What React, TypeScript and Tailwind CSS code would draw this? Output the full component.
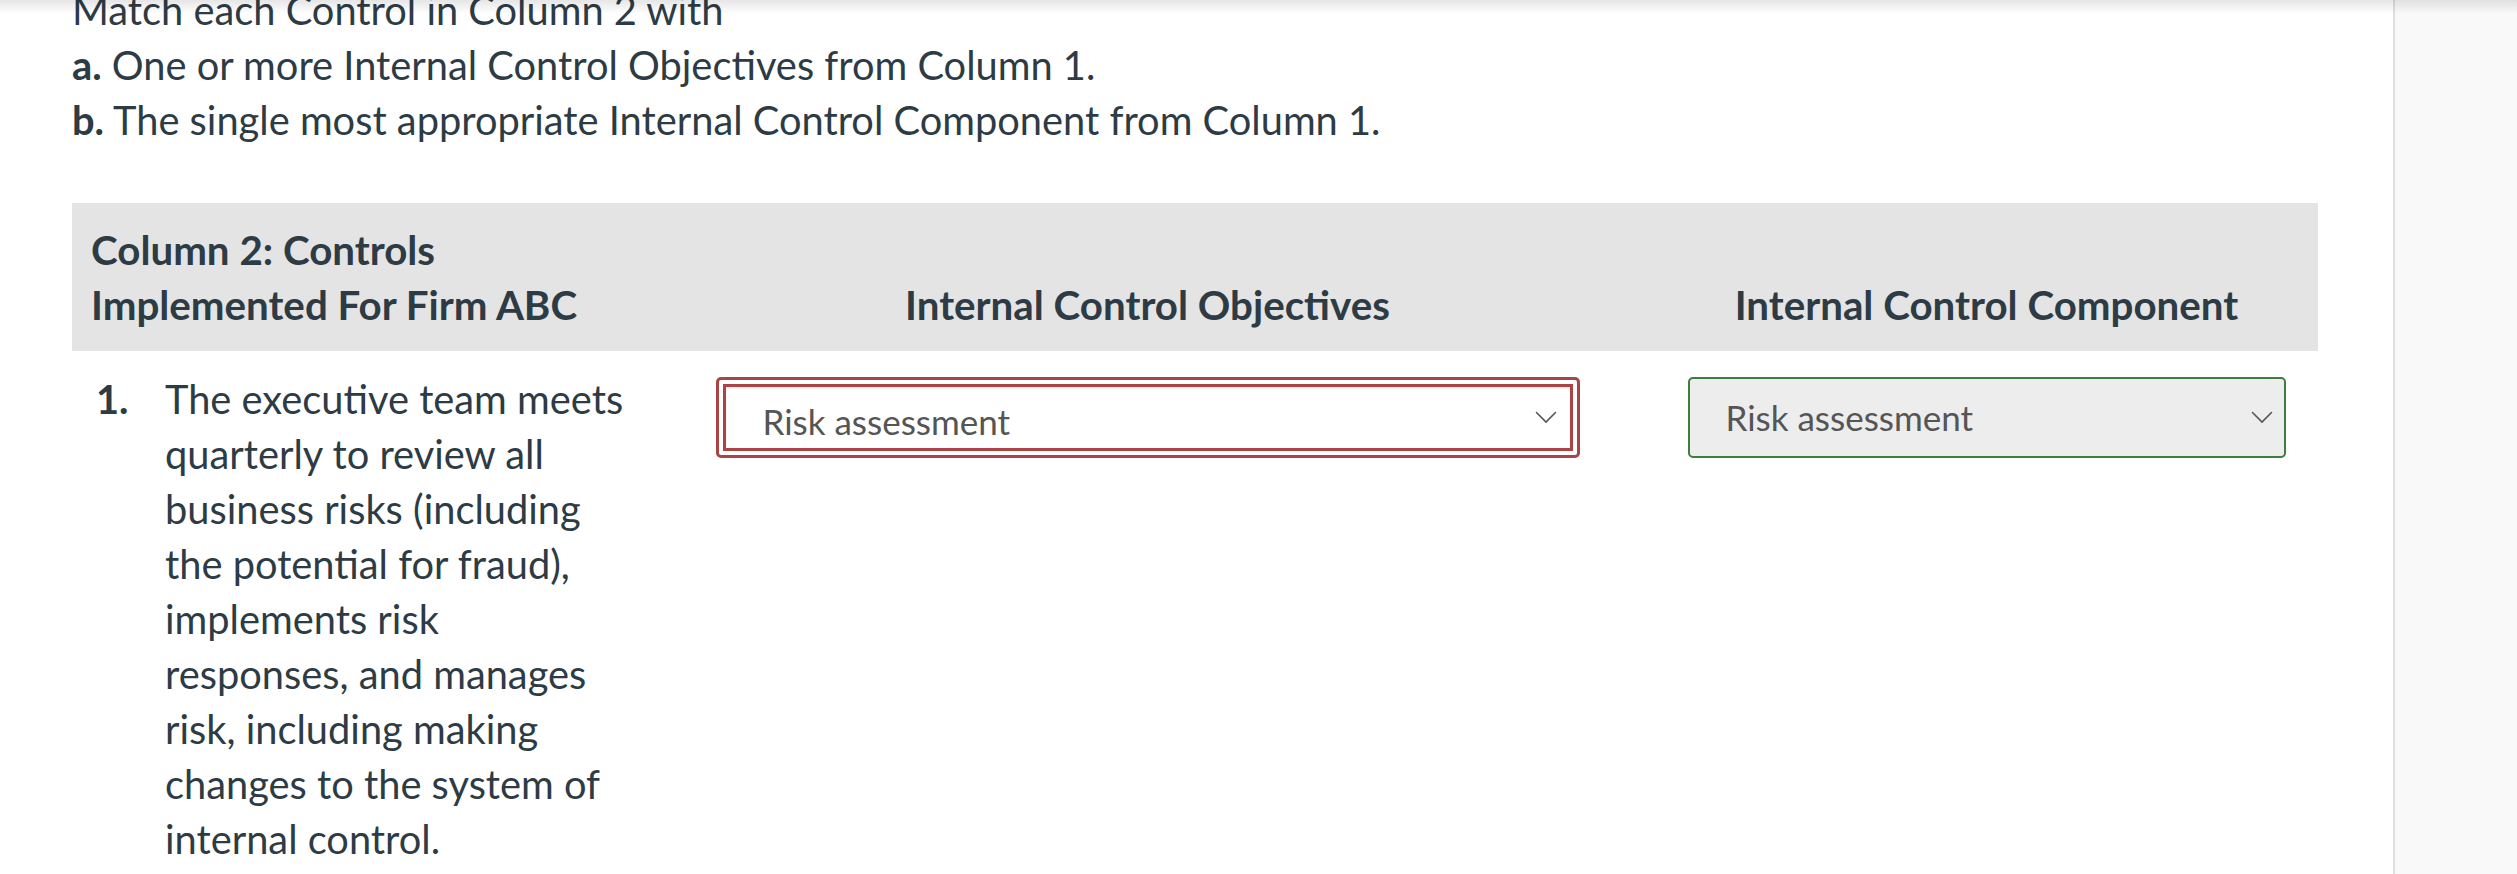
import React from 'react';

const Chevron = () => (
  <svg width="22" height="13" viewBox="0 0 22 13" fill="none" stroke="#555" strokeWidth="1.6" strokeLinecap="round">
    <polyline points="1.5,1.5 11,11 20.5,1.5" />
  </svg>
);

const App = () => {
  return (
    <div className="relative flex h-[874px] w-full overflow-hidden bg-white font-[Lato,sans-serif] text-[#2d3b45]">
      {/* shadow from the fixed bar above */}
      <div className="pointer-events-none absolute inset-x-0 top-0 h-[14px] bg-gradient-to-b from-black/10 to-transparent" />

      <main className="flex-1 border-r-2 border-[#dedede] pl-[72px]">
        <div className="-mt-[18px] text-[39.8px] leading-[55px]">
          <p>Match each Control in Column 2 with</p>
          <p>
            <b>a.</b> One or more Internal Control Objectives from Column 1.
          </p>
          <p>
            <b>b.</b> The single most appropriate Internal Control Component from Column 1.
          </p>
        </div>

        <div className="mt-[56px] w-[2246px] text-[39.8px] leading-[55px]">
          <div className="grid grid-cols-[568px_1015px_663px] items-end bg-[#e4e4e4] text-[40.3px] font-bold">
            <div className="py-[19px] pl-[19px] pr-[18px]">
              Column 2: Controls
              <br />
              Implemented For Firm ABC
            </div>
            <div className="py-[19px] text-center">Internal Control Objectives</div>
            <div className="py-[19px] text-center">Internal Control Component</div>
          </div>

          <div className="grid grid-cols-[568px_1015px_663px]">
            <div className="flex pl-[24px] pr-[10px] pt-[20px]">
              <span className="w-[69px] shrink-0 font-bold">1.</span>
              <span>
                The executive team meets quarterly to review all business risks (including the potential for
                fraud), implements risk responses, and manages risk, including making changes to the system of
                internal control.
              </span>
            </div>

            <div className="flex justify-center pt-[26px]">
              <div className="h-[81px] w-[864px] rounded-[5px] border-[3px] border-[#ab4545] p-[4px]">
                <div className="flex h-full items-center justify-between border-[3px] border-[#ab4545] bg-white pl-[37px] pr-[13px] text-[35px] text-[#555] shadow-[inset_0_2px_2px_rgba(0,0,0,0.08)]">
                  <span className="pt-[8px]">Risk assessment</span>
                  <Chevron />
                </div>
              </div>
            </div>

            <div className="flex justify-center pt-[26px]">
              <div className="flex h-[81px] w-[598px] items-center justify-between rounded-[5px] border-2 border-[#3d7d3d] bg-[#ededed] pl-[36px] pr-[11px] text-[35px] text-[#555]">
                <span>Risk assessment</span>
                <Chevron />
              </div>
            </div>
          </div>
        </div>
      </main>

      <aside className="w-[122px] bg-[#f9f9f9]" />
    </div>
  );
};

export default App;
